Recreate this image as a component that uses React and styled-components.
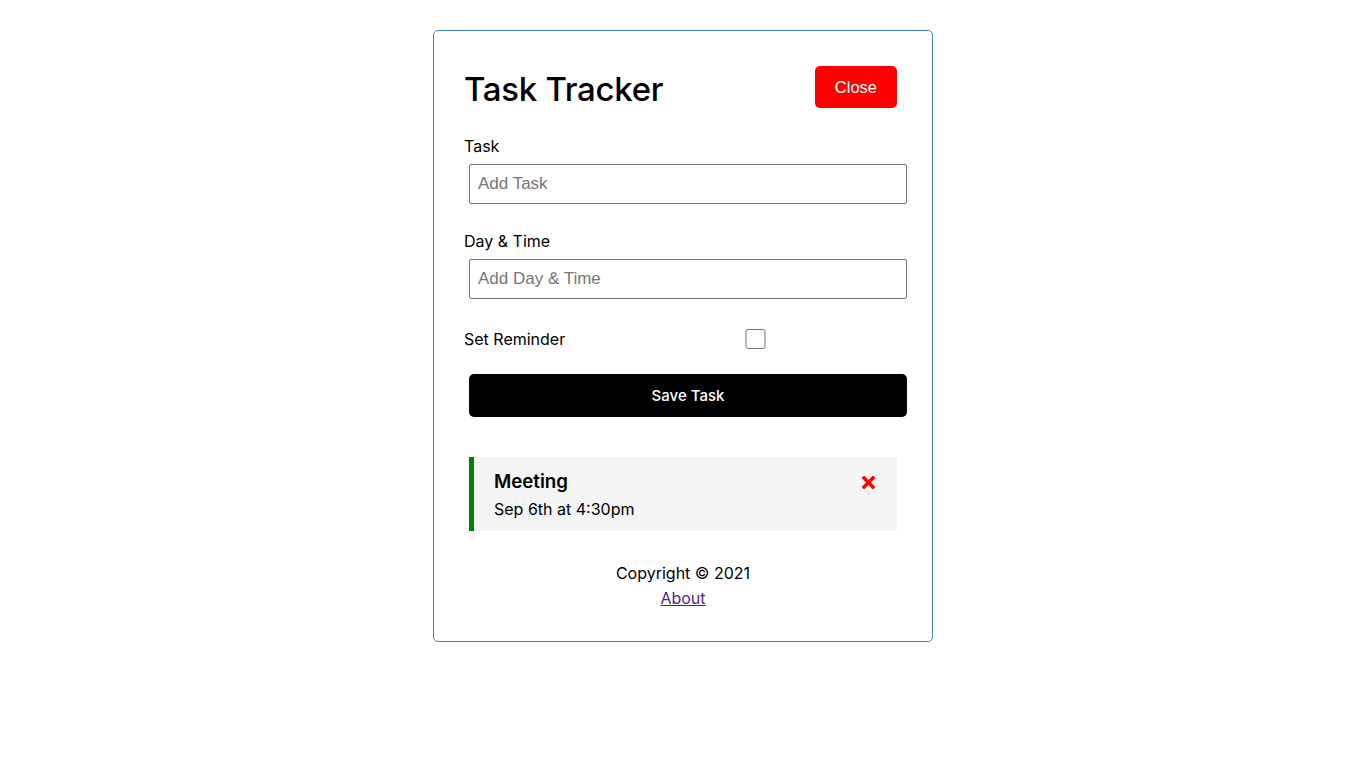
import React from 'react'
import styled, { createGlobalStyle } from 'styled-components'
import { FaTimes } from 'react-icons/fa'

const GlobalStyle = createGlobalStyle`
  * {
    box-sizing: border-box;
    margin: 0;
    padding: 0;
  }
  body {
    font-family: 'Inter', 'Open Sans', sans-serif;
    background: #fff;
    color: #000;
  }
`

const Container = styled.div`
  max-width: 500px;
  margin: 30px auto;
  overflow: auto;
  min-height: 300px;
  border: 1px solid steelblue;
  padding: 30px;
  border-radius: 5px;
`

const Header = styled.header`
  display: flex;
  justify-content: space-between;
  align-items: center;
  height: 53px;
  margin-bottom: 20px;
`

const Title = styled.h1`
  font-size: 33px;
  font-weight: 500;
  letter-spacing: -0.3px;
  padding-top: 2px;
`

const Btn = styled.button`
  display: ${props => (props.block ? 'block' : 'inline-block')};
  width: ${props => (props.block ? '100%' : 'auto')};
  background: ${props => props.color || '#000'};
  color: #fff;
  border: none;
  padding: 0 20px;
  height: ${props => (props.block ? '43px' : '42px')};
  margin: 5px;
  border-radius: 5px;
  cursor: pointer;
  font-size: ${props => (props.block ? '15px' : '16.5px')};
  font-family: ${props => (props.block ? "'Inter', sans-serif" : "'Liberation Sans', Arial, sans-serif")};
  font-weight: ${props => (props.block ? 500 : 400)};
  align-self: flex-start;
`

const Form = styled.form`
  margin-bottom: 40px;
`

const Control = styled.div`
  margin: 20px 0;

  label {
    display: block;
    font-size: 16px;
    line-height: 25px;
  }

  input {
    width: 100%;
    height: 40px;
    margin: 5px;
    padding: 3px 8px;
    font-size: 17px;
    font-family: 'Liberation Sans', Arial, sans-serif;
    border: 1px solid #767676;
    border-radius: 2px;
  }

  input::placeholder {
    color: #757575;
  }
`

const CheckControl = styled.div`
  display: flex;
  align-items: center;
  justify-content: space-between;
  height: 30px;
  margin: 20px 0;

  label {
    flex: 1;
    font-size: 16px;
    line-height: 24px;
  }

  input {
    flex: 2;
    height: 20px;
    margin: 0 3px 0 4px;
  }
`

const Task = styled.div`
  background: #f4f4f4;
  margin: 5px;
  padding: 10px 20px;
  cursor: pointer;
  border-left: ${props => (props.reminder ? '5px solid green' : 'none')};

  h3 {
    display: flex;
    align-items: center;
    justify-content: space-between;
    font-size: 18.7px;
    font-weight: 600;
    line-height: 30px;
  }

  p {
    font-size: 16px;
    line-height: 24px;
  }
`

const DeleteIcon = styled(FaTimes)`
  color: red;
  cursor: pointer;
  margin-right: -1px;
`

const Footer = styled.footer`
  margin-top: 30px;
  text-align: center;
  font-size: 16px;

  p {
    line-height: 24px;
  }

  a {
    display: inline-block;
    line-height: 26px;
    color: #551a8b;
  }
`

const App = () => {
  return (
    <>
      <GlobalStyle />
      <Container>
        <Header>
          <Title>Task Tracker</Title>
          <Btn type="button" color="red">Close</Btn>
        </Header>

        <Form onSubmit={e => e.preventDefault()}>
          <Control>
            <label>Task</label>
            <input type="text" placeholder="Add Task" />
          </Control>
          <Control>
            <label>Day &amp; Time</label>
            <input type="text" placeholder="Add Day & Time" />
          </Control>
          <CheckControl>
            <label>Set Reminder</label>
            <input type="checkbox" />
          </CheckControl>
          <Btn type="submit" block>Save Task</Btn>
        </Form>

        <Task reminder>
          <h3>
            Meeting
            <DeleteIcon size={19} />
          </h3>
          <p>Sep 6th at 4:30pm</p>
        </Task>

        <Footer>
          <p>Copyright &copy; 2021</p>
          <a href="#about">About</a>
        </Footer>
      </Container>
    </>
  )
}

export default App
